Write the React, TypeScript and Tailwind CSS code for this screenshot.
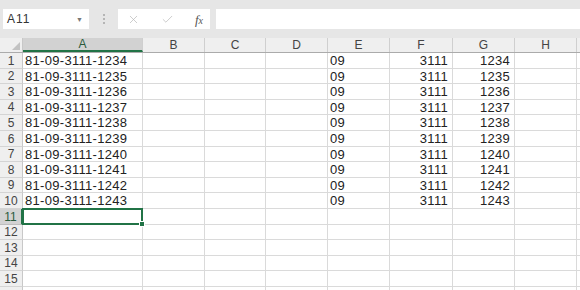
import * as React from 'react'
import { X, Check } from 'lucide-react'

const cols = ['A', 'B', 'C', 'D', 'E', 'F', 'G', 'H']
const colWidth: Record<string, string> = {
  A: 'w-[120px]',
  B: 'w-[62px]',
  C: 'w-[61px]',
  D: 'w-[62px]',
  E: 'w-[62px]',
  F: 'w-[63px]',
  G: 'w-[62px]',
  H: 'w-[62px]',
}

const rowHeights = ['h-[16px]', 'h-[15px]', 'h-[16px]', 'h-[15px]', 'h-[16px]']

const cellFont = "font-['Liberation_Sans',sans-serif] text-[13px] tracking-[0.3px] text-[#222] leading-none"

function cellFor(row: number, col: string) {
  if (row > 10) return null
  const last = 1233 + row
  if (col === 'A') return { text: `81-09-3111-${last}`, right: false }
  if (col === 'E') return { text: '09', right: false }
  if (col === 'F') return { text: '3111', right: true }
  if (col === 'G') return { text: String(last), right: true }
  return null
}

export default function App() {
  const rows = Array.from({ length: 16 }, (_, i) => i + 1)

  return (
    <div className="w-[580px] h-[290px] overflow-hidden bg-white font-['Liberation_Sans',sans-serif]">
      {/* Formula bar */}
      <div className="h-[38px] bg-[#e6e6e6] flex items-start pt-[9px] pl-[3px]">
        <div className="w-[86px] h-[20px] bg-white flex items-center justify-between pl-[4px] pr-[6px]">
          <span className="text-[12px] tracking-[1px] text-[#333] leading-none">A11</span>
          <span className="text-[7px] text-[#777] leading-none">▼</span>
        </div>
        <div className="w-[29px] h-[20px] flex items-center justify-center">
          <div className="flex flex-col gap-[2px]">
            <span className="w-[2px] h-[2px] bg-[#b5b5b5]" />
            <span className="w-[2px] h-[2px] bg-[#b5b5b5]" />
            <span className="w-[2px] h-[2px] bg-[#b5b5b5]" />
          </div>
        </div>
        <div className="w-[92px] h-[20px] bg-white flex items-center pl-[9px] pr-[7px] justify-between">
          <X size={13} strokeWidth={1.3} className="text-[#b8b8b8]" />
          <Check size={13} strokeWidth={1.3} className="text-[#b8b8b8]" />
          <span className="font-['Liberation_Serif',serif] italic text-[13px] text-[#555] leading-none">
            f<span className="text-[10px]">x</span>
          </span>
        </div>
        <div className="flex-1 h-[20px] bg-white ml-[6px]" />
      </div>

      {/* Column headers */}
      <div className="flex h-[15px] bg-[#efefef] border-b border-[#ababab]">
        <div className="w-[23px] h-full border-r border-[#c8c8c8] relative">
          <div className="absolute right-[2px] bottom-[2px] w-0 h-0 border-l-[8px] border-l-transparent border-b-[8px] border-b-[#c2c2c2]" />
        </div>
        {cols.map((c) => (
          <div
            key={c}
            className={`${colWidth[c]} h-full flex items-center justify-center text-[12px] leading-none border-r border-[#cfcfcf] ${
              c === 'A' ? 'bg-[#d2d2d2] text-[#2a5a3c] border-b-2 border-b-[#217346]' : 'text-[#444]'
            }`}
          >
            {c}
          </div>
        ))}
        <div className="flex-1 h-full" />
      </div>

      {/* Rows */}
      {rows.map((r, i) => (
        <div key={r} className={`flex ${rowHeights[i % 5]}`}>
          <div
            className={`w-[23px] h-full flex items-center justify-center text-[12px] leading-none border-b ${
              r === 11
                ? 'bg-[#d2d2d2] text-[#2a5a3c] border-r-2 border-r-[#217346] border-b-[#bdbdbd]'
                : 'bg-[#efefef] text-[#444] border-r border-r-[#c8c8c8] border-b-[#d4d4d4]'
            }`}
          >
            {r < 16 ? r : ''}
          </div>
          {cols.map((c) => {
            const cell = cellFor(r, c)
            return (
              <div
                key={c}
                className={`${colWidth[c]} h-full border-r border-b border-[#dadada] flex items-center ${
                  cell?.right ? 'justify-end pr-[4px]' : 'pl-[2px]'
                } relative`}
              >
                {cell && <span className={cellFont}>{cell.text}</span>}
                {r === 11 && c === 'A' && (
                  <div className="absolute z-10 -left-[1px] -top-[1px] -right-[1px] -bottom-[1px] border-2 border-[#217346]">
                    <div className="absolute -right-[4px] -bottom-[4px] w-[6px] h-[6px] bg-[#217346] border border-white" />
                  </div>
                )}
              </div>
            )
          })}
          <div className="flex-1 h-full border-b border-[#dadada]" />
        </div>
      ))}
    </div>
  )
}
